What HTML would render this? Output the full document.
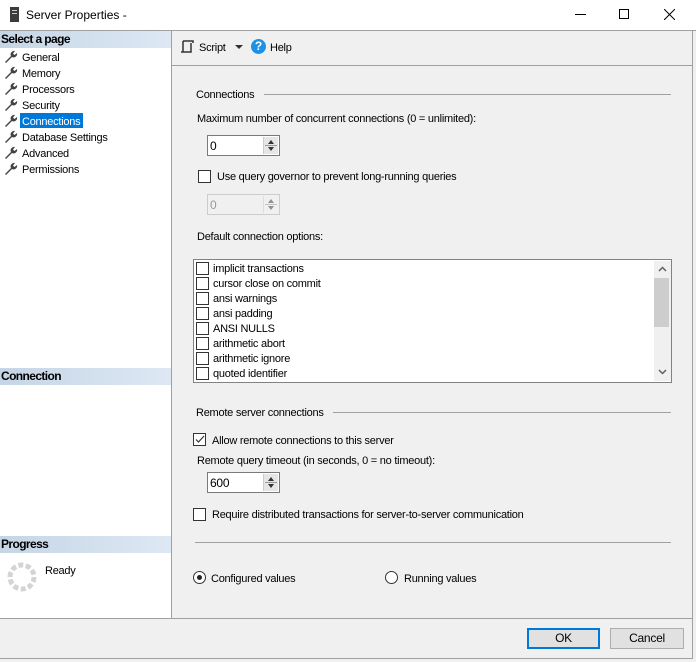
<!DOCTYPE html>
<html><head><meta charset="utf-8"><style>
*{box-sizing:border-box;margin:0;padding:0}
body{width:696px;height:662px;position:relative;background:#f0f0f0;font-family:"Liberation Sans",Arial,sans-serif;font-size:11px;letter-spacing:-0.25px;color:#000;overflow:hidden}
.a{position:absolute;white-space:nowrap}
.t{position:absolute;white-space:nowrap;line-height:14px;margin-top:1px}
.hdr{position:absolute;left:0;width:171px;height:17px;background:linear-gradient(to right,#c6d5e5,#dde8f4);font-weight:bold;font-size:12px;line-height:17px;padding-left:1px;letter-spacing:-0.6px}
.cb{position:absolute;width:13px;height:13px;border:1px solid #333;background:#fff}
.spin{position:absolute;width:73px;height:21px;border:1px solid #7a7a7a;background:#fff}
.spin span{position:absolute;left:2px;top:3px;color:#000;font-size:12px}
.spin .b{position:absolute;right:1px;top:1px;width:15px;height:17px;background:#e6e6e6;border-left:1px solid #ccc}
.spin .b:before{content:"";position:absolute;left:4px;top:3px;border-left:3px solid transparent;border-right:3px solid transparent;border-bottom:4px solid #333}
.spin .b:after{content:"";position:absolute;left:4px;top:10px;border-left:3px solid transparent;border-right:3px solid transparent;border-top:4px solid #333}
.spin .b i{position:absolute;left:1px;right:1px;top:8px;height:1px;background:#999}
.li{position:absolute;left:0;height:15px}
.li .cb{left:2px;top:1px}
.li .t{left:19px;top:0px}
.rad{position:absolute;width:13px;height:13px;border:1px solid #333;border-radius:50%;background:#fff}
</style></head><body>
<div class="a" style="left:0;top:0;width:696px;height:30px;background:#fff"></div>
<div class="a" style="left:10px;top:7px;width:9px;height:15px;background:#3c3c3c"></div>
<div class="a" style="left:12px;top:10px;width:5px;height:1px;background:#ccc"></div>
<div class="a" style="left:12px;top:13px;width:5px;height:1px;background:#ccc"></div>
<div class="t" style="left:26px;top:7px;font-size:12px;letter-spacing:0">Server Properties -</div>
<div class="a" style="left:575px;top:14px;width:11px;height:1px;background:#000"></div>
<div class="a" style="left:619px;top:9px;width:10px;height:10px;border:1px solid #000"></div>
<svg class="a" style="left:664px;top:9px" width="11" height="11"><path d="M0 0L11 11M11 0L0 11" stroke="#000" stroke-width="1"/></svg>
<div class="a" style="left:0;top:30px;width:696px;height:1px;background:#a0a0a0"></div>
<div class="a" style="left:0;top:31px;width:171px;height:587px;background:#fff"></div>
<div class="a" style="left:171px;top:31px;width:1px;height:587px;background:#a0a0a0"></div>
<div class="hdr" style="top:31px">Select a page</div>
<div class="hdr" style="top:368px">Connection</div>
<div class="hdr" style="top:536px">Progress</div>
<div class="t" style="left:22px;top:50px">General</div>
<div class="t" style="left:22px;top:66px">Memory</div>
<div class="t" style="left:22px;top:82px">Processors</div>
<div class="t" style="left:22px;top:98px">Security</div>
<div class="a" style="left:20px;top:113px;width:63px;height:15px;background:#0078d7"></div>
<div class="t" style="left:22px;top:114px;color:#fff">Connections</div>
<div class="t" style="left:22px;top:130px">Database Settings</div>
<div class="t" style="left:22px;top:146px">Advanced</div>
<div class="t" style="left:22px;top:162px">Permissions</div>
<svg class="a" style="left:4px;top:50px" width="14" height="130">
<g fill="#444">
<path id="w" d="M1 12L7 6A3.5 3.5 0 0 1 11 1L9 3.5L10.5 5L13 3A3.5 3.5 0 0 1 8 7L2 13Z"/>
<use href="#w" y="16"/><use href="#w" y="32"/><use href="#w" y="48"/><use href="#w" y="64"/><use href="#w" y="80"/><use href="#w" y="96"/><use href="#w" y="112"/>
</g></svg>
<svg class="a" style="left:7px;top:562px" width="30" height="30"><circle cx="15" cy="15" r="12" fill="none" stroke="#d4d4d4" stroke-width="5" stroke-dasharray="5 2.5"/></svg>
<div class="t" style="left:45px;top:563px">Ready</div>
<svg class="a" style="left:180px;top:40px" width="14" height="14"><path d="M3 1H13V3M3 1V12H1M3 12H11V3" fill="none" stroke="#333" stroke-width="1.5"/></svg>
<div class="t" style="left:199px;top:40px">Script</div>
<div class="a" style="left:235px;top:45px;border-left:4px solid transparent;border-right:4px solid transparent;border-top:4px solid #333"></div>
<div class="a" style="left:251px;top:39px;width:15px;height:15px;border-radius:50%;background:#1e90e6;color:#fff;font-weight:bold;font-size:12px;text-align:center;line-height:15px;letter-spacing:0">?</div>
<div class="t" style="left:270px;top:40px">Help</div>
<div class="a" style="left:172px;top:65px;width:520px;height:1px;background:#a0a0a0"></div>
<div class="a" style="left:692px;top:31px;width:1px;height:627px;background:#a0a0a0"></div>
<div class="t" style="left:196px;top:87px">Connections</div>
<div class="a" style="left:264px;top:94px;width:407px;height:1px;background:#a0a0a0"></div>
<div class="t" style="left:197px;top:111px">Maximum number of concurrent connections (0 = unlimited):</div>
<div class="spin" style="left:207px;top:135px"><span>0</span><div class="b"><i></i></div></div>
<div class="cb" style="left:198px;top:170px"></div>
<div class="t" style="left:217px;top:169px">Use query governor to prevent long-running queries</div>
<div class="spin" style="left:207px;top:194px;border-color:#ccc;background:#f0f0f0"><span style="color:#999">0</span><div class="b" style="background:#f0f0f0;opacity:.5"><i></i></div></div>
<div class="t" style="left:197px;top:229px">Default connection options:</div>
<div class="a" style="left:193px;top:259px;width:479px;height:124px;border:1px solid #828282;background:#fff">
<div class="li" style="top:1px"><div class="cb"></div><div class="t">implicit transactions</div></div>
<div class="li" style="top:16px"><div class="cb"></div><div class="t">cursor close on commit</div></div>
<div class="li" style="top:31px"><div class="cb"></div><div class="t">ansi warnings</div></div>
<div class="li" style="top:46px"><div class="cb"></div><div class="t">ansi padding</div></div>
<div class="li" style="top:61px"><div class="cb"></div><div class="t">ANSI NULLS</div></div>
<div class="li" style="top:76px"><div class="cb"></div><div class="t">arithmetic abort</div></div>
<div class="li" style="top:91px"><div class="cb"></div><div class="t">arithmetic ignore</div></div>
<div class="li" style="top:106px"><div class="cb"></div><div class="t">quoted identifier</div></div>
<div class="a" style="left:460px;top:1px;width:17px;height:120px;background:#f0f0f0"></div>
<div class="a" style="left:460px;top:18px;width:15px;height:49px;background:#cdcdcd"></div>
<svg class="a" style="left:464px;top:6px" width="9" height="6"><path d="M1 5L4.5 1.5L8 5" fill="none" stroke="#606060" stroke-width="1.5"/></svg>
<svg class="a" style="left:464px;top:109px" width="9" height="6"><path d="M1 1L4.5 4.5L8 1" fill="none" stroke="#606060" stroke-width="1.5"/></svg>
</div>
<div class="t" style="left:196px;top:405px">Remote server connections</div>
<div class="a" style="left:333px;top:412px;width:338px;height:1px;background:#a0a0a0"></div>
<div class="cb" style="left:193px;top:433px"></div>
<svg class="a" style="left:195px;top:435px" width="10" height="9"><path d="M1 4.5L3.5 7L9 1" fill="none" stroke="#333" stroke-width="1.2"/></svg>
<div class="t" style="left:212px;top:433px">Allow remote connections to this server</div>
<div class="t" style="left:197px;top:453px">Remote query timeout (in seconds, 0 = no timeout):</div>
<div class="spin" style="left:207px;top:472px"><span>600</span><div class="b"><i></i></div></div>
<div class="cb" style="left:193px;top:508px"></div>
<div class="t" style="left:212px;top:507px">Require distributed transactions for server-to-server communication</div>
<div class="a" style="left:195px;top:542px;width:476px;height:1px;background:#a0a0a0"></div>
<div class="rad" style="left:193px;top:571px"></div>
<div class="a" style="left:197px;top:575px;width:5px;height:5px;border-radius:50%;background:#222"></div>
<div class="t" style="left:211px;top:571px">Configured values</div>
<div class="rad" style="left:385px;top:571px"></div>
<div class="t" style="left:404px;top:571px">Running values</div>
<div class="a" style="left:0;top:618px;width:693px;height:1px;background:#a0a0a0"></div>
<div class="a" style="left:527px;top:628px;width:73px;height:21px;border:2px solid #0078d7;background:#e1e1e1;text-align:center;line-height:17px;font-size:12px">OK</div>
<div class="a" style="left:610px;top:628px;width:74px;height:21px;border:1px solid #adadad;background:#e1e1e1;text-align:center;line-height:19px;font-size:12px">Cancel</div>
<div class="a" style="left:0;top:658px;width:693px;height:1px;background:#a0a0a0"></div>
</body></html>
